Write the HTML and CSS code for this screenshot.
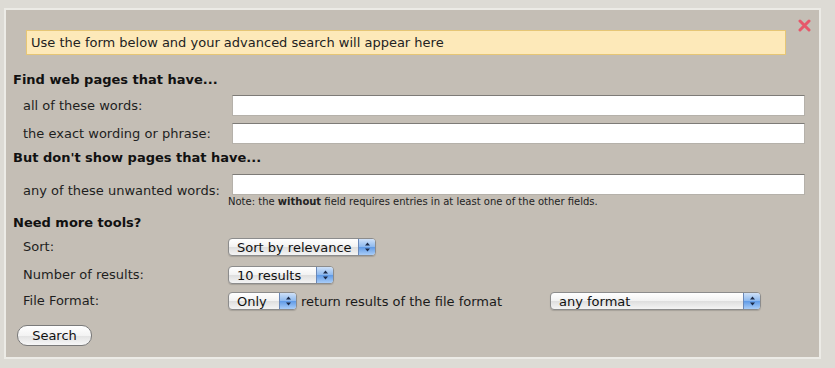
FILE: index.html
```html
<!DOCTYPE html>
<html>
<head>
<meta charset="utf-8">
<link rel="stylesheet" href="styles.css">
</head>
<body>
<div class="panel">
  <svg class="close" width="13" height="13" viewBox="0 0 13 13"><path d="M2 2 L11 11 M11 2 L2 11" stroke="#e6586a" stroke-width="3" stroke-linecap="round"/></svg>
  <div class="notice">Use the form below and your advanced search will appear here</div>

  <div class="heading h-first">Find web pages that have...</div>
  <div class="row row-input r1">
    <span class="label">all of these words:</span>
    <div class="textbox"></div>
  </div>
  <div class="row row-input r2">
    <span class="label">the exact wording or phrase:</span>
    <div class="textbox"></div>
  </div>

  <div class="heading h-second">But don't show pages that have...</div>
  <div class="row row-unwanted">
    <span class="label label-low">any of these unwanted words:</span>
    <div class="field-col">
      <div class="textbox tb-shift"></div>
      <div class="note">Note: the <b>without</b> field requires entries in at least one of the other fields.</div>
    </div>
  </div>

  <div class="heading h-third">Need more tools?</div>
  <div class="row row-select s1">
    <span class="label">Sort:</span>
    <div class="select w-sort"><span class="sel-text">Sort by relevance</span><span class="cap"><svg width="7" height="10" viewBox="0 0 7 10"><path d="M3.5 0.5 L6 3.5 L1 3.5 Z M3.5 9.5 L6 6.5 L1 6.5 Z" fill="#1b2a48"/></svg></span></div>
  </div>
  <div class="row row-select s2">
    <span class="label">Number of results:</span>
    <div class="select w-num"><span class="sel-text">10 results</span><span class="cap"><svg width="7" height="10" viewBox="0 0 7 10"><path d="M3.5 0.5 L6 3.5 L1 3.5 Z M3.5 9.5 L6 6.5 L1 6.5 Z" fill="#1b2a48"/></svg></span></div>
  </div>
  <div class="row row-select s3">
    <span class="label">File Format:</span>
    <div class="select w-only"><span class="sel-text">Only</span><span class="cap"><svg width="7" height="10" viewBox="0 0 7 10"><path d="M3.5 0.5 L6 3.5 L1 3.5 Z M3.5 9.5 L6 6.5 L1 6.5 Z" fill="#1b2a48"/></svg></span></div>
    <span class="inline-text">return results of the file format</span>
    <div class="select w-format"><span class="sel-text">any format</span><span class="cap"><svg width="7" height="10" viewBox="0 0 7 10"><path d="M3.5 0.5 L6 3.5 L1 3.5 Z M3.5 9.5 L6 6.5 L1 6.5 Z" fill="#1b2a48"/></svg></span></div>
  </div>

  <div class="btn-row"><span class="button">Search</span></div>
</div>
</body>
</html>
```

FILE: styles.css
```css
html, body {
  margin: 0;
  padding: 0;
}
body {
  background: #dddbd5;
  font-family: "DejaVu Sans", Verdana, sans-serif;
  font-size: 13px;
  color: #1a1a1a;
  width: 835px;
  height: 368px;
  overflow: hidden;
}
.panel {
  position: relative;
  margin: 8px 14px 0 4px;
  border: 2px solid #ecebe6;
  background: #c4beb5;
  padding: 20px 14px 11px 7px;
}
.close {
  position: absolute;
  right: 8px;
  top: 9px;
}
.notice {
  margin: 0 19px 0 13px;
  height: 23px;
  line-height: 23px;
  border: 1px solid #e6c675;
  background: #fde9b9;
  padding-left: 4px;
  color: #222;
}
.heading {
  font-weight: bold;
  font-size: 13px;
  height: 18px;
  line-height: 18px;
  color: #111;
}
.h-first { margin-top: 16px; }
.h-second { margin-top: 5px; }
.h-third { margin-top: 7px; }
.row {
  display: flex;
  align-items: center;
}
.label {
  width: 209px;
  padding-left: 10px;
  flex: none;
  color: #1e1e1e;
  line-height: 16px;
}
.row-input { height: 21px; }
.r1 { margin-top: 6px; }
.r2 { margin-top: 7px; }
.textbox {
  flex: 1;
  height: 19px;
  background: #fff;
  border: 1px solid #b5b1aa;
  border-top-color: #7d7b77;
}
.row-unwanted {
  margin-top: 7px;
  align-items: flex-start;
}
.label-low {
  margin-top: 9px;
}
.field-col {
  flex: 1;
  margin-left: -4px;
}
.tb-shift {
  margin-left: 4px;
}
.note {
  font-size: 10px;
  margin-top: 1px;
  line-height: 11px;
  color: #222;
}
.row-select {
  height: 18px;
}
.s1 { margin-top: 6px; }
.s2 { margin-top: 10px; }
.s3 { margin-top: 8px; }
.row-select .label {
  width: 205px;
}
.select {
  position: relative;
  height: 16px;
  border: 1px solid #8c8c8c;
  border-radius: 4px;
  background: linear-gradient(#ffffff, #f2f2f2 50%, #dedede 51%, #f4f4f4);
  box-shadow: 0 1px 1px rgba(0,0,0,0.15);
  display: flex;
  align-items: center;
  font-size: 13px;
  color: #111;
  flex: none;
}
.sel-text {
  padding-left: 8px;
  flex: 1;
}
.cap {
  width: 16px;
  height: 16px;
  border-left: 1px solid #6a88b8;
  border-radius: 0 3px 3px 0;
  background: linear-gradient(#cfe1f8, #8cb8ee 50%, #5f9ae6 51%, #a9cdf7);
  display: flex;
  align-items: center;
  justify-content: center;
}
.w-sort { width: 146px; }
.w-num { width: 104px; }
.w-only { width: 67px; }
.w-format { width: 209px; margin-left: 48px; }
.inline-text {
  margin-left: 4px;
  font-size: 13px;
}
.btn-row {
  margin-top: 15px;
  margin-left: 4px;
}
.button {
  display: inline-block;
  width: 73px;
  height: 19px;
  line-height: 19px;
  text-align: center;
  border: 1px solid #7a7a7a;
  border-radius: 10px;
  background: linear-gradient(#ffffff, #f3f3f3 50%, #e2e2e2 51%, #f7f7f7);
  font-size: 13px;
  color: #111;
}
```
